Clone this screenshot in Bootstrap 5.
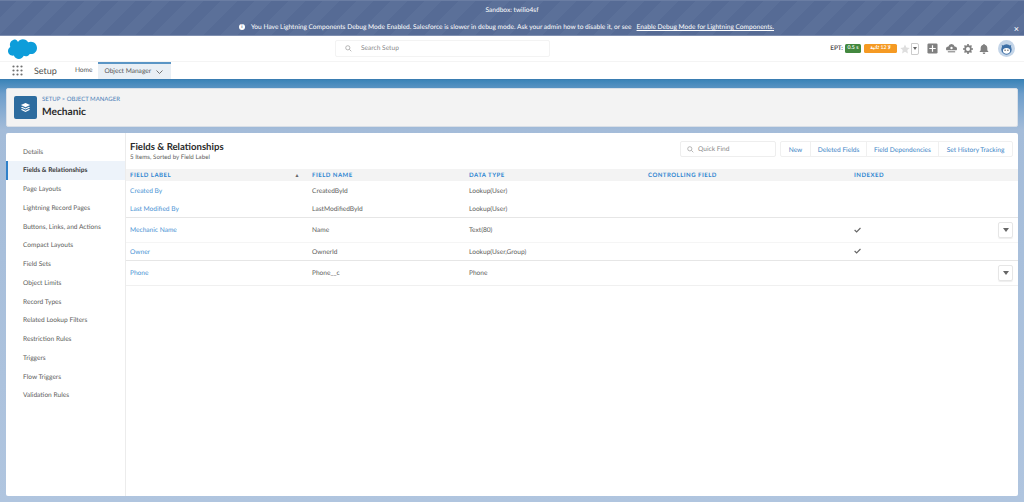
<!DOCTYPE html>
<html lang="en">
<head>
<meta charset="utf-8">
<title>Mechanic | Salesforce</title>
<link href="https://cdn.jsdelivr.net/npm/bootstrap@5.3.0/dist/css/bootstrap.min.css" rel="stylesheet">
<style>
html,body{height:100%;overflow:hidden}
body{font-family:Lato,"Noto Sans",sans-serif;font-size:6.6px;color:#555;background:#aec3de;text-rendering:geometricPrecision}
.shell{height:502px}
.sbx{height:36px;background:repeating-linear-gradient(135deg,#566b95 0 12px,#5b7099 12px 24px);border-top:1px solid #6a7da3;border-bottom:1px solid #7f8fb0;color:#fff;position:relative;line-height:1}
.sbx-top{padding-top:6px;height:23px;font-size:6.6px}
.sbx-msg{font-size:6.6px;gap:5px;padding-right:11px}
.sbx-i{width:6px;height:6px;background:#fff;color:#56698f;border-radius:50%;font-size:5px;line-height:6px;font-weight:700;text-align:center;margin-right:1px}
.sbx-x{position:absolute;right:5px;top:24px;font-size:9px;line-height:8px;color:#fff}
.hdr{height:25px;background:#fff;padding:0 9px 0 8px}
.srch{width:215px;height:17px;border:1px solid #f3f3f3;border-radius:2px;margin-left:298px;color:#8b8b8b;padding-left:9px;gap:9px;font-size:6.6px}
.ept{font-size:6.4px;font-weight:700;color:#555}
.pill{height:9px;border-radius:1.5px;color:#fff;font-size:5.2px;line-height:9px;font-weight:600;text-align:center}
.pg{width:16px;background:#43883f;margin-left:2px}
.po{width:33px;background:#f59a23;margin-left:3px}
.fav{width:12px;height:12px;margin-left:2px}
.favd{width:8px;height:12px;border:1px solid #ccc;border-radius:0 2px 2px 0;margin-right:8px}
.hico{margin-right:6px}
.hico-l{margin-right:8px}
.hico-b{margin-right:9px}
.avt{width:17px;height:17px}
.tabs{height:19px;background:#fff;border-top:1px solid #f4f4f4;border-bottom:1px solid #3a7db2;padding-left:12px}
.setup{font-size:9px;margin:0 12px 0 11px;color:#4f4f4d}
.tab-a{padding:1px 6px 0;font-size:6.6px}
.tab-b{width:73px;height:100%;background:#e9eff5;border-top:2px solid #5a95c5;padding-left:6px;gap:5px;font-size:6.6px}
.stage{background:linear-gradient(180deg,#3b84b8 0,#6e9ecb 14px,#a4bcd9 50px,#b0c5df 100%);padding:8px 6px 6px}
.phead{height:39px;background:#f3f3f3;border:1px solid #d9dfe7;border-radius:2px;padding-left:7px;gap:5px;margin-bottom:6px}
.phico{width:23px;height:23px;background:#2d6c9f;border-radius:2px}
.crumb{font-size:6px;color:#4d80b7;line-height:8px}
.phname{font-size:10.2px;font-weight:700;color:#2b2b2b;line-height:14px;margin-top:1px}
.pane{background:#fff;border-radius:2px;min-height:0}
.side{width:120px;border-right:1px solid #ececec;padding-top:9.5px;font-size:6.6px}
.side a{display:block;height:18.75px;line-height:18.75px;padding-left:17px;color:#5d5d5b;text-decoration:none}
.side a.on{background:#edf3fa;border-left:2px solid #2f80c9;padding-left:15px;font-weight:700;color:#3a3a3a}
.sect-h{height:36px;padding:8px 5px 0 4px}
.sect-l{padding-top:1px}
.sect-t{font-size:9.6px;font-weight:700;color:#2b2b2b;line-height:12px}
.sect-s{font-size:6.2px;line-height:8px;color:#5d5d5b}
.qf{width:96px;height:16px;border:1px solid #eee;border-radius:2px;padding:1px 0 0 6px;gap:4px;color:#888;margin-right:4px;font-size:6.6px}
.bgrp{height:16px;border:1px solid #f0f0f0;border-radius:2px;font-size:6.6px;color:#3d84c6}
.bgrp span{line-height:16px;border-right:1px solid #f0f0f0;height:14px}
.bgrp span:last-child{border-right:0}
.bw1{width:30px}.bw2{width:56px}.bw3{width:72px}.bw4{width:73px}
.fld{table-layout:fixed;width:100%;margin:0;font-size:6.6px;--bs-table-bg:transparent;--bs-table-color:#5d5d5b}
.c1{width:182px}.c2{width:157px}.c3{width:179px}.c4{width:206px}
.fld th{height:12px;padding:2px 0 0 4px;background:#f3f3f3;color:#2f86d1;font-size:6px;letter-spacing:.5px;font-weight:700;border:0;line-height:10px;white-space:nowrap}
.fld td{padding:3px 0 0 4px;vertical-align:middle;border-bottom:0;color:#5d5d5b;white-space:nowrap}
.fld td a{color:#4a93d4;text-decoration:none}
.fld td.nudge{padding-top:0}
.r18{height:18.5px}.r18b{height:18px;border-bottom:1px solid #e6e6e6}
.r24{height:24.5px;border-bottom:1px solid #f5f5f5}.r24b{height:24.5px;border-bottom:1px solid #f0f0f0}
.r18c{height:18.5px;border-bottom:1px solid #e6e6e6}
.sort{float:right;margin:0 8px 0 0;font-size:5px;color:#666}
.rbtn{width:15px;height:16px;border:1px solid #e6e6e6;border-radius:2px;box-shadow:0 1px 1px #eee;margin-right:5px;margin-left:auto}
</style>
</head>
<body>
<div class="shell d-flex flex-column">
  <div class="sbx flex-shrink-0">
    <div class="sbx-top text-center">Sandbox: twilio4sf</div>
    <div class="sbx-msg d-flex justify-content-center align-items-center">
      <span class="sbx-i">i</span><span>You Have Lightning Components Debug Mode Enabled. Salesforce is slower in debug mode. Ask your admin how to disable it, or see</span><u>Enable Debug Mode for Lightning Components.</u>
    </div>
    <span class="sbx-x">×</span>
  </div>
  <div class="hdr d-flex align-items-center flex-shrink-0">
    <svg width="29" height="20" viewBox="0 0 29 20"><path fill="#0d9dda" d="M10 3C11 1.400 12.800.3 14.800.3c2.300 0 4.300 1.200 5.300 3 .9-.4 1.800-.6 2.800-.6 3.400 0 6.100 2.800 6.100 6.200s-2.700 6.200-6.100 6.200c-.4 0-.8 0-1.200-.1-.8 1.400-2.300 2.300-4 2.300-.7 0-1.400-.2-2-.5-.8 1.900-2.700 3.200-4.800 3.200-2.300 0-4.200-1.400-5-3.400-.3.1-.7.100-1 .1C2.100 16.700 0 14.600 0 12c0-1.800.9-3.300 2.300-4.100-.3-.7-.4-1.400-.4-2.100C1.900 2.900 4.300.600 7.100.600 8.300.600 9.300 1.500 10 3z"/></svg>
    <div class="srch d-flex align-items-center">
      <svg width="7" height="7" viewBox="0 0 10 10" fill="none" stroke="#999" stroke-width="1"><circle cx="4" cy="4" r="3"/><path d="M6.300 6.300 9 9"/></svg><span>Search Setup</span>
    </div>
    <div class="ms-auto d-flex align-items-center">
      <span class="ept">EPT:</span><span class="pill pg">0.5 s</span><span class="pill po">لا 12 ثانية</span>
      <svg class="fav" viewBox="0 0 12 12"><path fill="#dedede" d="m6 1.500 1.400 3 3.300.4-2.400 2.200.6 3.300L6 8.800l-2.900 1.600.6-3.300L1.300 4.900l3.300-.4z"/></svg>
      <span class="favd d-flex align-items-center justify-content-center"><svg width="4" height="3" viewBox="0 0 4 3"><path fill="#666" d="M0 0h4L2 3z"/></svg></span>
      <svg class="hico-l" width="11" height="11" viewBox="0 0 12 12"><rect x=".5" y=".5" width="11" height="11" rx="1.500" fill="#808080"/><path d="M6 2.500v7M2.500 6h7" stroke="#fff" stroke-width="1.300"/></svg>
      <svg class="hico" width="11" height="11" viewBox="0 0 12 12"><path fill="#808080" d="M6 1a3.500 3.500 0 0 1 3.400 2.800A2.600 2.600 0 0 1 12 6.500c0 .6-.2 1.100-.5 1.500H.5A2.600 2.600 0 0 1 0 6.500a2.600 2.600 0 0 1 2.600-2.700A3.500 3.500 0 0 1 6 1z"/><path fill="#808080" d="M2 9h8v1.200H2z"/><circle cx="6" cy="5.500" r="1.300" fill="#fff"/></svg>
      <svg class="hico" width="10" height="10" viewBox="0 0 12 12"><circle cx="6" cy="6" r="3.400" fill="none" stroke="#808080" stroke-width="2"/><path stroke="#808080" stroke-width="2" d="M6 0v2.500M6 9.500V12M0 6h2.500M9.500 6H12M1.800 1.800l1.800 1.800M8.400 8.400l1.800 1.800M10.200 1.800 8.400 3.600M3.600 8.400l-1.800 1.800"/></svg>
      <svg class="hico-b" width="10" height="10" viewBox="0 0 12 12"><path fill="#808080" d="M6 0a1 1 0 0 1 1 1c2 .5 3 2 3 4v2.500L11.500 9.500H.5L2 7.500V5c0-2 1-3.500 3-4a1 1 0 0 1 1-1z"/><path fill="#808080" d="M4.500 10.300h3A1.500 1.500 0 0 1 6 12a1.500 1.500 0 0 1-1.500-1.700z"/></svg>
      <svg class="avt" viewBox="0 0 18 18"><circle cx="9" cy="9" r="9" fill="#c4d5e8"/><circle cx="9" cy="10" r="5.500" fill="#3d6fa6"/><path fill="#3d6fa6" d="M4 5l2.500 2-2 2zM14 5l-2.500 2 2 2z"/><ellipse cx="9" cy="11.500" rx="3.800" ry="3" fill="#fff"/><circle cx="7.500" cy="10.800" r=".7" fill="#333"/><circle cx="10.500" cy="10.800" r=".7" fill="#333"/></svg>
    </div>
  </div>
  <div class="tabs d-flex align-items-center flex-shrink-0">
    <svg width="11" height="11" viewBox="0 0 11 11" fill="#707070"><circle cx="1.500" cy="1.500" r="1.100"/><circle cx="5.500" cy="1.500" r="1.100"/><circle cx="9.500" cy="1.500" r="1.100"/><circle cx="1.500" cy="5.500" r="1.100"/><circle cx="5.500" cy="5.500" r="1.100"/><circle cx="9.500" cy="5.500" r="1.100"/><circle cx="1.500" cy="9.500" r="1.100"/><circle cx="5.500" cy="9.500" r="1.100"/><circle cx="9.500" cy="9.500" r="1.100"/></svg>
    <span class="setup">Setup</span>
    <span class="tab-a">Home</span>
    <div class="tab-b d-flex align-items-center"><span>Object Manager</span><svg width="7" height="4" viewBox="0 0 7 4" fill="none" stroke="#666" stroke-width=".9"><path d="m.5.500 3 3 3-3"/></svg></div>
  </div>
  <div class="stage flex-grow-1 d-flex flex-column">
    <div class="phead d-flex align-items-center flex-shrink-0">
      <div class="phico d-flex align-items-center justify-content-center">
        <svg width="11" height="11" viewBox="0 0 12 12" fill="#fff"><path d="M6 1 11 3.400 6 5.800 1 3.400z"/><path d="M2.300 5.200 6 7 9.700 5.200 11 5.900 6 8.300 1 5.900z"/><path d="M2.300 7.700 6 9.500l3.700-1.800 1.300.7-5 2.400-5-2.400z"/></svg>
      </div>
      <div>
        <div class="crumb">SETUP &gt; OBJECT MANAGER</div>
        <div class="phname">Mechanic</div>
      </div>
    </div>
    <div class="pane flex-grow-1 d-flex">
      <nav class="side flex-shrink-0">
        <a href="#">Details</a>
        <a href="#" class="on">Fields &amp; Relationships</a>
        <a href="#">Page Layouts</a>
        <a href="#">Lightning Record Pages</a>
        <a href="#">Buttons, Links, and Actions</a>
        <a href="#">Compact Layouts</a>
        <a href="#">Field Sets</a>
        <a href="#">Object Limits</a>
        <a href="#">Record Types</a>
        <a href="#">Related Lookup Filters</a>
        <a href="#">Restriction Rules</a>
        <a href="#">Triggers</a>
        <a href="#">Flow Triggers</a>
        <a href="#">Validation Rules</a>
      </nav>
      <main class="flex-grow-1">
        <div class="sect-h d-flex align-items-start">
          <div class="sect-l">
            <div class="sect-t">Fields &amp; Relationships</div>
            <div class="sect-s">5 Items, Sorted by Field Label</div>
          </div>
          <div class="ms-auto d-flex">
            <div class="qf d-flex align-items-center"><svg width="7" height="7" viewBox="0 0 10 10" fill="none" stroke="#999"><circle cx="4" cy="4" r="3"/><path d="M6.300 6.300 9 9"/></svg><span>Quick Find</span></div>
            <div class="bgrp d-flex text-center">
              <span class="bw1">New</span><span class="bw2 text-nowrap">Deleted Fields</span><span class="bw3 text-nowrap">Field Dependencies</span><span class="bw4 text-nowrap">Set History Tracking</span>
            </div>
          </div>
        </div>
        <table class="table fld">
          <colgroup><col class="c1"><col class="c2"><col class="c3"><col class="c4"><col></colgroup>
          <thead><tr><th>FIELD LABEL<span class="sort">▲</span></th><th>FIELD NAME</th><th>DATA TYPE</th><th>CONTROLLING FIELD</th><th>INDEXED</th></tr></thead>
          <tbody>
            <tr class="r18"><td><a href="#">Created By</a></td><td>CreatedById</td><td>Lookup(User)</td><td></td><td></td></tr>
            <tr class="r18b"><td><a href="#">Last Modified By</a></td><td>LastModifiedById</td><td>Lookup(User)</td><td></td><td></td></tr>
            <tr class="r24"><td><a href="#">Mechanic Name</a></td><td>Name</td><td>Text(80)</td><td></td><td class="nudge"><div class="d-flex align-items-center"><svg width="7" height="6" viewBox="0 0 8 6" fill="none" stroke="#666" stroke-width="1.300"><path d="m.7 3 2.300 2.300L7.400.7"/></svg><span class="rbtn d-flex align-items-center justify-content-center"><svg width="6" height="4" viewBox="0 0 6 4"><path fill="#666" d="M0 0h6L3 4z"/></svg></span></div></td></tr>
            <tr class="r18c"><td><a href="#">Owner</a></td><td>OwnerId</td><td>Lookup(User,Group)</td><td></td><td class="nudge"><svg width="7" height="6" viewBox="0 0 8 6" fill="none" stroke="#666" stroke-width="1.300"><path d="m.7 3 2.300 2.300L7.400.7"/></svg></td></tr>
            <tr class="r24b"><td><a href="#">Phone</a></td><td>Phone__c</td><td>Phone</td><td></td><td class="nudge"><div class="d-flex align-items-center"><span class="rbtn d-flex align-items-center justify-content-center"><svg width="6" height="4" viewBox="0 0 6 4"><path fill="#666" d="M0 0h6L3 4z"/></svg></span></div></td></tr>
          </tbody>
        </table>
      </main>
    </div>
  </div>
</div>
</body>
</html>
